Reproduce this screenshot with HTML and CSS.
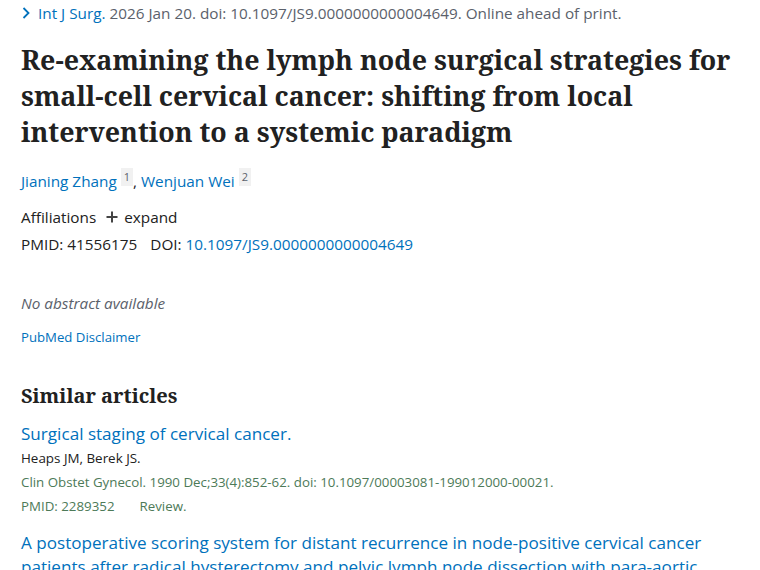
FILE: index.html
```html
<!DOCTYPE html>
<html lang="en">
<head>
<meta charset="utf-8">
<title>Re-examining the lymph node surgical strategies</title>
<link rel="stylesheet" href="styles.css">
</head>
<body>
<main class="article">
  <div class="cit">
    <svg class="chev" width="10" height="14" viewBox="0 0 10 14"><polyline points="2.5,2 7.5,7 2.5,12" fill="none" stroke="#0071bc" stroke-width="1.8"/></svg>
    <a class="link" href="#">Int J Surg.</a>
    <span class="cit-rest">2026 Jan 20. doi: 10.1097/JS9.0000000000004649. Online ahead of print.</span>
  </div>
  <h1 class="title">Re-examining the lymph node surgical strategies for small-cell cervical cancer: shifting from local intervention to a systemic paradigm</h1>
  <div class="authors">
    <a class="link" href="#">Jianing Zhang</a><sup class="aff">1</sup>, <a class="link" href="#">Wenjuan Wei</a><sup class="aff">2</sup>
  </div>
  <div class="affil">
    <span>Affiliations</span>
    <span class="expand"><svg class="plus" width="12" height="12" viewBox="0 0 12 12"><path d="M6 0.5V11.5M0.5 6H11.5" stroke="#444" stroke-width="2" fill="none"/></svg>expand</span>
  </div>
  <div class="ids">
    <span>PMID: 41556175</span>
    <span class="doi">DOI: <a class="link" href="#">10.1097/JS9.0000000000004649</a></span>
  </div>
  <p class="noabs">No abstract available</p>
  <a class="link disclaimer" href="#">PubMed Disclaimer</a>
  <h2 class="similar">Similar articles</h2>
  <div class="doc">
    <a class="link doc-title" href="#">Surgical staging of cervical cancer.</a>
    <div class="doc-authors">Heaps JM, Berek JS.</div>
    <div class="doc-cit">Clin Obstet Gynecol. 1990 Dec;33(4):852-62. doi: 10.1097/00003081-199012000-00021.</div>
    <div class="doc-cit"><span class="pmid">PMID: 2289352</span><span>Review.</span></div>
  </div>
  <div class="doc">
    <a class="link doc-title" href="#">A postoperative scoring system for distant recurrence in node-positive cervical cancer patients after radical hysterectomy and pelvic lymph node dissection with para-aortic lymph node sampling or dissection.</a>
  </div>
</main>
</body>
</html>
```
FILE: styles.css
```css
html, body { margin: 0; padding: 0; background: #fff; }
body {
  font-family: "Open Sans", "Noto Sans", sans-serif;
  color: #212121;
  font-size: 15.3px;
}
.article { padding: 1px 21px 0; width: 718px; }
.link { color: #0071bc; text-decoration: none; }
.cit { line-height: 24px; display: flex; align-items: center; color: #5b616b; white-space: nowrap; }
.chev { margin-right: 7px; flex: none; }
.cit .link { margin-right: 4px; }
.title {
  font-family: "Noto Serif", "DejaVu Serif", serif;
  font-size: 26.8px;
  font-weight: bold;
  line-height: 36px;
  margin: 17px 0 0;
  color: #212121;
  width: 716px;
}
.authors { margin-top: 19px; line-height: 24px; }
.aff {
  font-size: 11px;
  color: #5b616b;
  background: #f1f1f1;
  padding: 1px 3px 2px;
  vertical-align: 6px;
  line-height: 1;
  margin-left: 4px;
}
.affil { margin-top: 12px; line-height: 24px; display: flex; gap: 10px; }
.expand { display: inline-flex; align-items: center; }
.plus { margin-right: 6px; flex: none; }
.ids { margin-top: 3px; line-height: 24px; display: flex; gap: 13px; }
.noabs { margin: 35px 0 0; line-height: 24px; font-style: italic; color: #5b616b; }
.disclaimer { display: block; margin-top: 12px; font-size: 13.2px; line-height: 20px; }
.similar {
  font-family: "Noto Serif", "DejaVu Serif", serif;
  font-size: 20px;
  font-weight: bold;
  line-height: 30px;
  margin: 34px 0 0;
}
.doc { margin-top: 11px; }
.doc + .doc { margin-top: 13px; }
.doc-title { display: block; font-size: 17.1px; line-height: 24px; }
.doc-authors { font-size: 13.4px; line-height: 24px; color: #212121; }
.doc-cit { font-size: 13.3px; line-height: 24px; color: #4d7a58; display: flex; }
.pmid { margin-right: 25px; }
```
